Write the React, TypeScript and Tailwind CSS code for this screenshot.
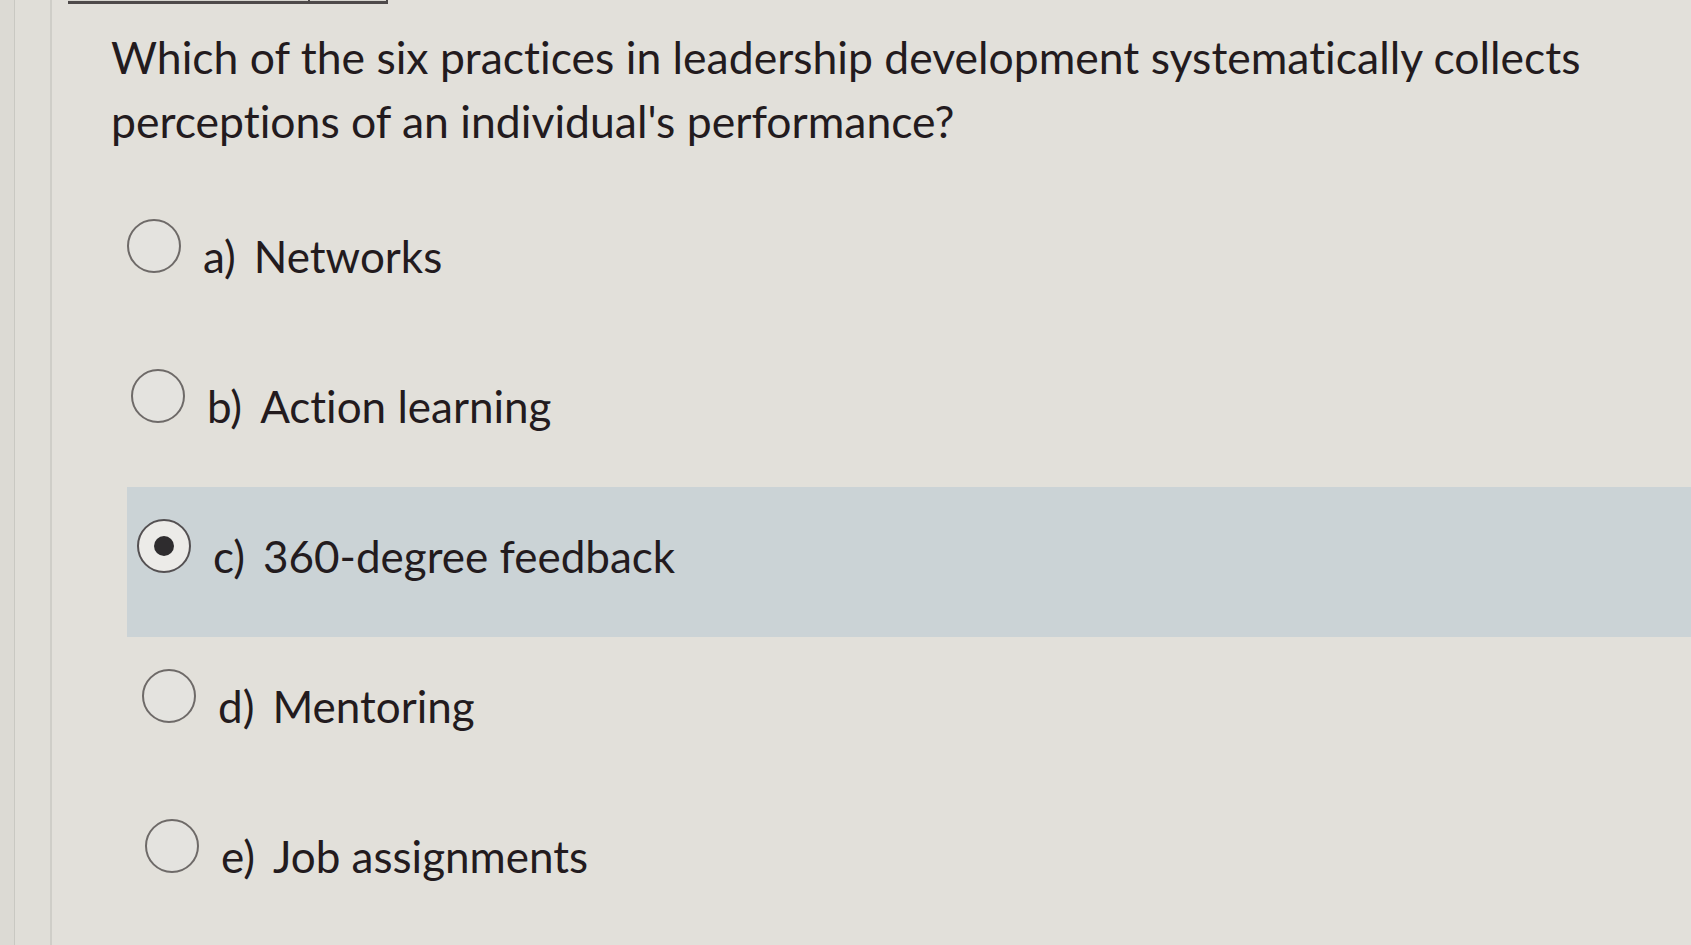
const options = [
  { label: 'a)', text: 'Networks', pad: 'pl-[0px]', selected: false },
  { label: 'b)', text: 'Action learning', pad: 'pl-[4px]', selected: false },
  { label: 'c)', text: '360-degree feedback', pad: 'pl-[10px]', selected: true },
  { label: 'd)', text: 'Mentoring', pad: 'pl-[15px]', selected: false },
  { label: 'e)', text: 'Job assignments', pad: 'pl-[18px]', selected: false },
];

function Radio({ checked }: { checked: boolean }) {
  return (
    <span
      className={
        'flex h-[54px] w-[54px] flex-shrink-0 items-center justify-center rounded-full border-[2px] bg-[#e4e3df] ' +
        (checked ? 'border-[#545052] bg-[#ecebe8]' : 'border-[#6e6a68]')
      }
    >
      {checked && <span className="h-[20px] w-[20px] rounded-full bg-[#2e2c2e]" />}
    </span>
  );
}

export default function App() {
  return (
    <div
      className="flex h-[945px] w-[1691px] overflow-hidden bg-[#e2e0da] text-[#231b1e] [font-variant-ligatures:none]"
      style={{ fontFamily: 'Lato, "Open Sans", sans-serif' }}
    >
      {/* left edge of the window */}
      <div className="flex h-full w-[52px] flex-shrink-0">
        <div className="h-full w-[15px] border-r border-[#c9c8c2] bg-[#dcdad4]" />
        <div className="h-full flex-1 border-r-2 border-[#cfcec8] bg-[#e0ded8]" />
      </div>

      <div className="flex flex-1 flex-col">
        {/* bottom of a toolbar button, cut off at the top */}
        <div className="ml-[16px] flex h-[4px] w-[320px]">
          <div className="h-full w-[242px] border-b-[3px] border-r-2 border-[#4e4a4a] bg-[#d8d6d0]" />
          <div className="h-full flex-1 border-b-[3px] border-r-2 border-[#4e4a4a] bg-[#d8d6d0]" />
        </div>

        {/* question */}
        <p className="ml-[59px] mt-[21px] w-[1540px] text-[44.5px] leading-[64px]">
          Which of the six practices in leadership development systematically collects perceptions of
          an individual's performance?
        </p>

        {/* answers */}
        <div className="ml-[75px] mt-[34px] flex flex-col">
          {options.map((o) => (
            <div
              key={o.label}
              className={
                'flex h-[150px] items-center pb-[12px] ' +
                o.pad +
                (o.selected ? ' bg-[#cbd3d6]' : '')
              }
            >
              <span className="mb-[20px]">
                <Radio checked={o.selected} />
              </span>
              <span className="ml-[22px] text-[44px] leading-[56px]">
                <span className="mr-[18px]">{o.label}</span>
                {o.text}
              </span>
            </div>
          ))}
        </div>
      </div>
    </div>
  );
}
